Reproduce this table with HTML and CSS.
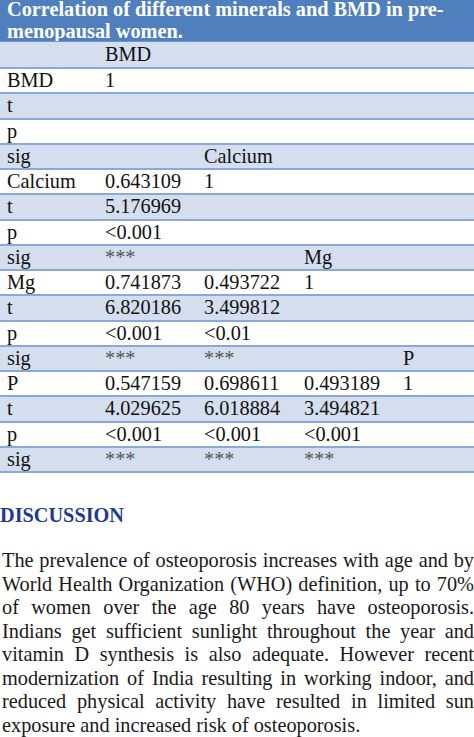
FILE: index.html
```html
<!DOCTYPE html>
<html>
<head>
<meta charset="utf-8">
<link rel="stylesheet" href="styles.css">
</head>
<body>
<div class="page">
  <div class="caption"><h1>Correlation of different minerals and BMD in pre-<br>menopausal women.</h1></div>
  <div class="table">
    <div class="row head light"><span></span><span>BMD</span><span></span><span></span><span></span></div>
    <div class="row"><span>BMD</span><span>1</span><span></span><span></span><span></span></div>
    <div class="row light"><span>t</span><span></span><span></span><span></span><span></span></div>
    <div class="row"><span>p</span><span></span><span></span><span></span><span></span></div>
    <div class="row light"><span>sig</span><span></span><span>Calcium</span><span></span><span></span></div>
    <div class="row"><span>Calcium</span><span>0.643109</span><span>1</span><span></span><span></span></div>
    <div class="row light"><span>t</span><span>5.176969</span><span></span><span></span><span></span></div>
    <div class="row"><span>p</span><span>&lt;0.001</span><span></span><span></span><span></span></div>
    <div class="row light"><span>sig</span><span class="star">***</span><span></span><span>Mg</span><span></span></div>
    <div class="row"><span>Mg</span><span>0.741873</span><span>0.493722</span><span>1</span><span></span></div>
    <div class="row light"><span>t</span><span>6.820186</span><span>3.499812</span><span></span><span></span></div>
    <div class="row"><span>p</span><span>&lt;0.001</span><span>&lt;0.01</span><span></span><span></span></div>
    <div class="row light"><span>sig</span><span class="star">***</span><span class="star">***</span><span></span><span>P</span></div>
    <div class="row"><span>P</span><span>0.547159</span><span>0.698611</span><span>0.493189</span><span>1</span></div>
    <div class="row light"><span>t</span><span>4.029625</span><span>6.018884</span><span>3.494821</span><span></span></div>
    <div class="row"><span>p</span><span>&lt;0.001</span><span>&lt;0.001</span><span>&lt;0.001</span><span></span></div>
    <div class="row light"><span>sig</span><span class="star">***</span><span class="star">***</span><span class="star">***</span><span></span></div>
  </div>
  <h2 class="section">DISCUSSION</h2>
  <p class="body-text">The prevalence of osteoporosis increases with age and by World Health Organization (WHO) definition, up to 70% of women over the age 80 years have osteoporosis. Indians get sufficient sunlight throughout the year and vitamin D synthesis is also adequate. However recent modernization of India resulting in working indoor, and reduced physical activity have resulted in limited sun exposure and increased risk of osteoporosis.</p>
</div>
</body>
</html>
```
FILE: styles.css
```css
html, body {
  margin: 0;
  padding: 0;
  background: #ffffff;
}
.page {
  width: 474px;
  overflow: hidden;
  font-family: "Liberation Serif", "Times New Roman", serif;
}
.caption {
  background: #4f7fbd;
  height: 42px;
  overflow: hidden;
  padding: 0 7px;
  border-bottom: 1px solid #6d93c9;
  box-sizing: border-box;
}
.caption h1 {
  margin: -2px 0 0 0;
  font-size: 20.3px;
  line-height: 22px;
  font-weight: bold;
  color: #ffffff;
}
.table {
  display: flex;
  flex-direction: column;
}
.row {
  display: grid;
  grid-template-columns: 98px 99px 100px 99px 1fr;
  height: 25.25px;
  box-sizing: border-box;
  border-bottom: 2px solid #8ba9d6;
  background: #ffffff;
  font-size: 20.3px;
  line-height: 23px;
  color: #111111;
}
.row.light {
  background: #d4deee;
}
.row.head {
  height: 27px;
  padding-top: 1px;
}
.row span {
  padding-left: 7px;
  white-space: nowrap;
}
.row .star {
  color: #555555;
}
.section {
  margin: 31px 0 0 0;
  font-size: 20.3px;
  line-height: 23px;
  font-weight: bold;
  color: #1c3a8e;
}
.body-text {
  margin: 22px 0 0 2px;
  width: 472px;
  font-size: 20.3px;
  line-height: 23.5px;
  text-align: justify;
  color: #1a1a1a;
}
```
